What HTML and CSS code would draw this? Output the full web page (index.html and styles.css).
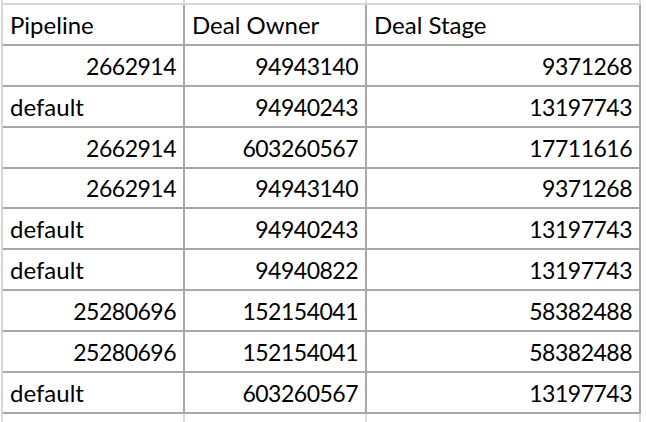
FILE: index.html
```html
<!DOCTYPE html>
<html>
<head>
<meta charset="utf-8">
<link rel="stylesheet" href="styles.css">
</head>
<body>
<div class="frame">
  <div class="ghost ghost-top"><div></div><div></div><div></div></div>
  <div class="sheet">
    <div class="cell">Pipeline</div><div class="cell">Deal Owner</div><div class="cell">Deal Stage</div>
    <div class="cell num">2662914</div><div class="cell num">94943140</div><div class="cell num">9371268</div>
    <div class="cell">default</div><div class="cell num">94940243</div><div class="cell num">13197743</div>
    <div class="cell num">2662914</div><div class="cell num">603260567</div><div class="cell num">17711616</div>
    <div class="cell num">2662914</div><div class="cell num">94943140</div><div class="cell num">9371268</div>
    <div class="cell">default</div><div class="cell num">94940243</div><div class="cell num">13197743</div>
    <div class="cell">default</div><div class="cell num">94940822</div><div class="cell num">13197743</div>
    <div class="cell num">25280696</div><div class="cell num">152154041</div><div class="cell num">58382488</div>
    <div class="cell num">25280696</div><div class="cell num">152154041</div><div class="cell num">58382488</div>
    <div class="cell">default</div><div class="cell num">603260567</div><div class="cell num">13197743</div>
  </div>
  <div class="ghost ghost-bottom"><div></div><div></div><div></div></div>
</div>
</body>
</html>
```

FILE: styles.css
```css
html, body {
  margin: 0;
  padding: 0;
  background: #ffffff;
}
body {
  width: 646px;
  height: 422px;
  overflow: hidden;
  font-family: Lato, "Open Sans", sans-serif;
  color: #000000;
}
.frame {
  margin-left: 1px;
}
.ghost {
  display: grid;
  grid-template-columns: 180px 180px 272px;
  column-gap: 2px;
  width: fit-content;
  background: #dcdcdc;
  border-left: 2px solid #dcdcdc;
  padding-right: 2px;
}
.ghost div {
  background: #ffffff;
}
.ghost-top {
  height: 3px;
}
.ghost-bottom {
  height: 10px;
}
.sheet {
  display: grid;
  grid-template-columns: 180px 180px 272px;
  grid-auto-rows: 38.9px;
  gap: 2px;
  width: fit-content;
  background: #a8a8a8;
  border-top: 2px solid #d6d6d6;
  border-left: 2px solid #d6d6d6;
  padding: 0 2px 2px 0;
}
.cell {
  background: #ffffff;
  display: flex;
  align-items: flex-end;
  justify-content: flex-start;
  padding: 0 6px 7px 7px;
  font-size: 24px;
  line-height: 24px;
  white-space: nowrap;
}
.num {
  justify-content: flex-end;
  font-size: 23px;
  letter-spacing: -0.5px;
  padding-right: 7px;
}
```
